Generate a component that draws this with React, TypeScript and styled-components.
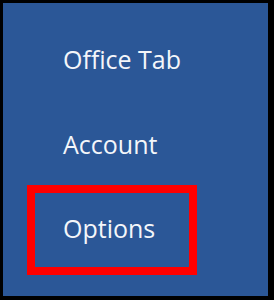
import React from 'react';
import styled, { createGlobalStyle } from 'styled-components';

const GlobalStyle = createGlobalStyle`
  html, body {
    margin: 0;
    padding: 0;
    background: #000;
  }
  body {
    width: 274px;
    height: 300px;
    overflow: hidden;
  }
`;

const Frame = styled.div`
  box-sizing: border-box;
  width: 274px;
  height: 300px;
  padding: 3px 6px 4px 3px;
  background: #000;
`;

const Backstage = styled.nav`
  box-sizing: border-box;
  height: 100%;
  background: #2b5797;
  display: flex;
  flex-direction: column;
  padding-top: 38px;
`;

const MenuItem = styled.div<{ $selected?: boolean; $spaceAfter?: number }>`
  box-sizing: border-box;
  font-family: 'Open Sans', 'Noto Sans', sans-serif;
  font-size: 25px;
  line-height: 36px;
  color: #f4f6fa;
  margin-bottom: ${(p) => p.$spaceAfter ?? 0}px;
  margin-left: ${(p) => (p.$selected ? '24px' : '0')};
  width: ${(p) => (p.$selected ? '170px' : 'auto')};
  padding: ${(p) => (p.$selected ? '17px 0 21px 28px' : '0 0 0 60px')};
  border: ${(p) => (p.$selected ? '8px solid #ff0000' : 'none')};
`;

const App = () => {
  return (
    <>
      <GlobalStyle />
      <Frame>
        <Backstage>
          <MenuItem $spaceAfter={49}>Office Tab</MenuItem>
          <MenuItem $spaceAfter={23}>Account</MenuItem>
          <MenuItem $selected>Options</MenuItem>
        </Backstage>
      </Frame>
    </>
  );
};

export default App;
